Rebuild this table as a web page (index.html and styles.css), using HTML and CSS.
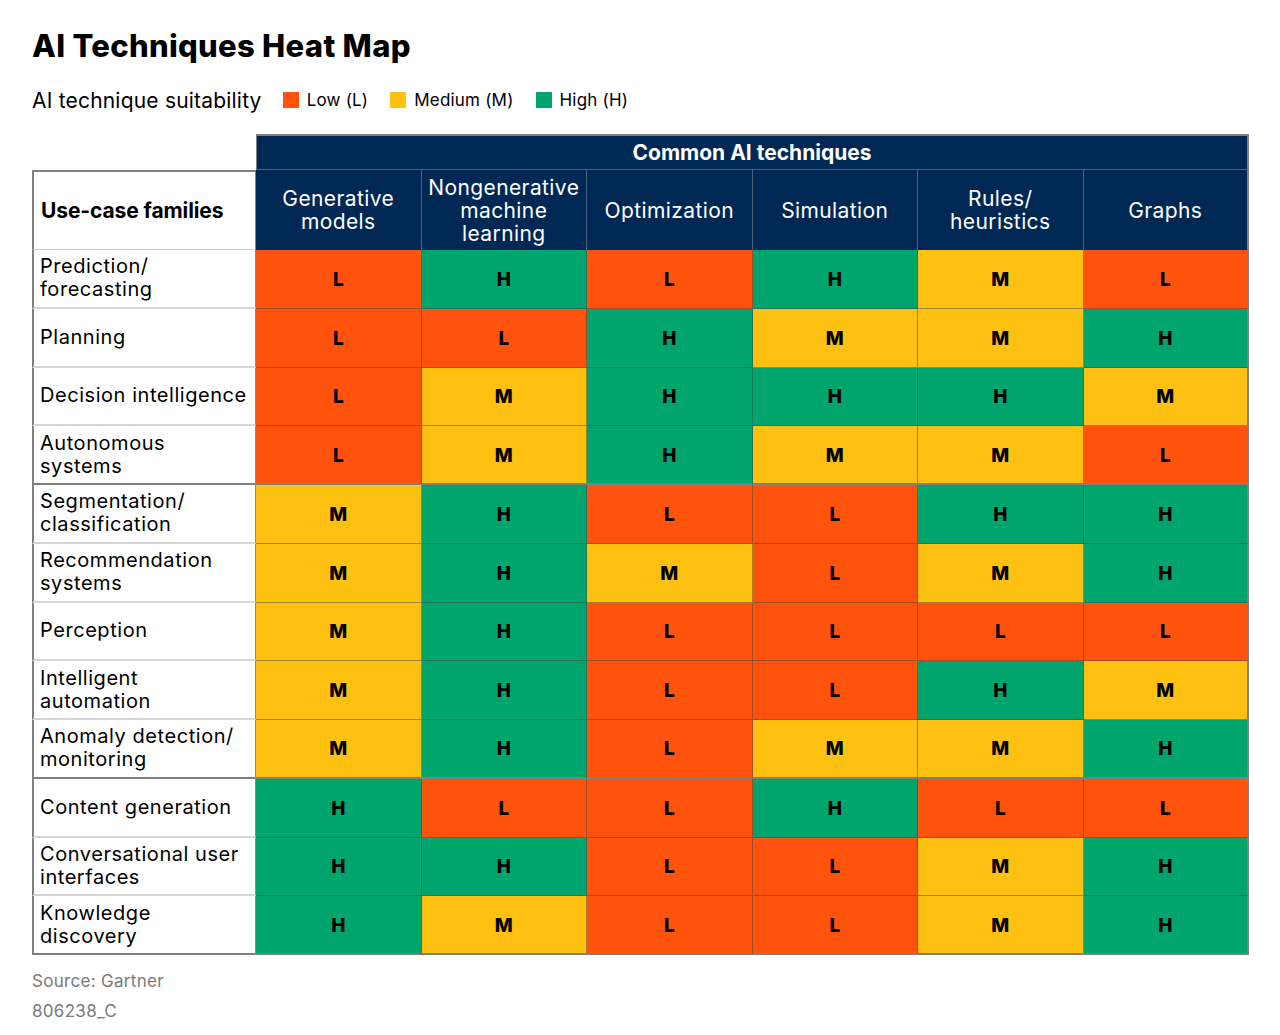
FILE: index.html
```html
<!DOCTYPE html>
<html lang="en">
<head>
<meta charset="utf-8">
<title>AI Techniques Heat Map</title>
<link rel="stylesheet" href="styles.css">
</head>
<body>
<div class="page">
  <h1 class="title">AI Techniques Heat Map</h1>
  <div class="legend">
    <span class="legend-label">AI technique suitability</span>
    <span class="legend-item"><span class="sw low"></span>Low (L)</span>
    <span class="legend-item"><span class="sw med"></span>Medium (M)</span>
    <span class="legend-item"><span class="sw high"></span>High (H)</span>
  </div>

  <div class="grid">
    <div class="corner"></div>
    <div class="span-head">Common AI techniques</div>

    <div class="fam-head">Use-case families</div>
    <div class="col-head">Generative<br>models</div>
    <div class="col-head">Nongenerative<br>machine<br>learning</div>
    <div class="col-head">Optimization</div>
    <div class="col-head">Simulation</div>
    <div class="col-head">Rules/<br>heuristics</div>
    <div class="col-head last">Graphs</div>

    <div class="lab">Prediction/<br>forecasting</div>
    <div class="c low">L</div><div class="c high">H</div><div class="c low">L</div><div class="c high">H</div><div class="c med">M</div><div class="c low last">L</div>

    <div class="lab">Planning</div>
    <div class="c low">L</div><div class="c low">L</div><div class="c high">H</div><div class="c med">M</div><div class="c med">M</div><div class="c high last">H</div>

    <div class="lab">Decision intelligence</div>
    <div class="c low">L</div><div class="c med">M</div><div class="c high">H</div><div class="c high">H</div><div class="c high">H</div><div class="c med last">M</div>

    <div class="lab gend">Autonomous<br>systems</div>
    <div class="c low gend">L</div><div class="c med gend">M</div><div class="c high gend">H</div><div class="c med gend">M</div><div class="c med gend">M</div><div class="c low gend last">L</div>

    <div class="lab">Segmentation/<br>classification</div>
    <div class="c med">M</div><div class="c high">H</div><div class="c low">L</div><div class="c low">L</div><div class="c high">H</div><div class="c high last">H</div>

    <div class="lab">Recommendation<br>systems</div>
    <div class="c med">M</div><div class="c high">H</div><div class="c med">M</div><div class="c low">L</div><div class="c med">M</div><div class="c high last">H</div>

    <div class="lab">Perception</div>
    <div class="c med">M</div><div class="c high">H</div><div class="c low">L</div><div class="c low">L</div><div class="c low">L</div><div class="c low last">L</div>

    <div class="lab">Intelligent<br>automation</div>
    <div class="c med">M</div><div class="c high">H</div><div class="c low">L</div><div class="c low">L</div><div class="c high">H</div><div class="c med last">M</div>

    <div class="lab gend">Anomaly detection/<br>monitoring</div>
    <div class="c med gend">M</div><div class="c high gend">H</div><div class="c low gend">L</div><div class="c med gend">M</div><div class="c med gend">M</div><div class="c high gend last">H</div>

    <div class="lab">Content generation</div>
    <div class="c high">H</div><div class="c low">L</div><div class="c low">L</div><div class="c high">H</div><div class="c low">L</div><div class="c low last">L</div>

    <div class="lab">Conversational user<br>interfaces</div>
    <div class="c high">H</div><div class="c high">H</div><div class="c low">L</div><div class="c low">L</div><div class="c med">M</div><div class="c high last">H</div>

    <div class="lab gend">Knowledge<br>discovery</div>
    <div class="c high gend">H</div><div class="c med gend">M</div><div class="c low gend">L</div><div class="c low gend">L</div><div class="c med gend">M</div><div class="c high gend last">H</div>
  </div>

  <p class="note">Source: Gartner</p>
  <p class="note">806238_C</p>
</div>
</body>
</html>
```

FILE: styles.css
```css
* { box-sizing: border-box; }

html, body {
  margin: 0;
  padding: 0;
  background: #ffffff;
}

body {
  font-family: "Inter", "Liberation Sans", sans-serif;
  color: #000000;
}

.page {
  padding: 26px 32px 0 32px;
}

.title {
  margin: 0;
  font-size: 31px;
  line-height: 40px;
  font-weight: 800;
  letter-spacing: 0.3px;
}

.legend {
  display: flex;
  align-items: center;
  margin-top: 17px;
  height: 34px;
  font-size: 17px;
  letter-spacing: 0.2px;
}

.legend-label {
  font-size: 21px;
  letter-spacing: 0.2px;
  margin-right: 21px;
}

.legend-item {
  display: flex;
  align-items: center;
  margin-right: 22px;
}

.sw {
  width: 16px;
  height: 16px;
  margin-right: 8px;
}

.low { background: #ff530d; }
.med { background: #fec111; }
.high { background: #00a56e; }

.grid {
  display: grid;
  grid-template-columns: 224px repeat(6, 1fr);
  grid-template-rows: 36px 80px repeat(12, 58.75px);
  width: 1217px;
  margin-top: 17px;
}

.corner { background: #ffffff; }

.span-head {
  grid-column: span 6;
  background: #002855;
  color: #ffffff;
  font-weight: 700;
  font-size: 21px;
  letter-spacing: 0;
  display: flex;
  align-items: center;
  justify-content: center;
  border-top: 2px solid #808080;
  border-left: 1px solid #808080;
  border-right: 2px solid #808080;
  border-bottom: 1px solid #4a6283;
}

.fam-head {
  display: flex;
  align-items: center;
  padding-left: 7px;
  font-weight: 700;
  font-size: 21px;
  letter-spacing: -0.1px;
  border-top: 2px solid #808080;
  border-left: 2px solid #808080;
  border-right: 1px solid #808080;
  border-bottom: 1px solid #cfcfcf;
}

.col-head {
  background: #002855;
  color: #ffffff;
  font-size: 21px;
  line-height: 23px;
  letter-spacing: 0.4px;
  text-align: center;
  display: flex;
  align-items: center;
  justify-content: center;
  border-right: 1px solid #4a6283;
}

.col-head.last { border-right: 2px solid #808080; }

.lab {
  display: flex;
  align-items: center;
  padding-left: 6px;
  font-size: 20px;
  line-height: 23px;
  letter-spacing: 0.55px;
  border-left: 2px solid #808080;
  border-right: 1px solid #8a8a8a;
  border-bottom: 2px solid #d6d6d6;
}

.c {
  display: flex;
  align-items: center;
  justify-content: center;
  font-weight: 800;
  font-size: 19px;
  padding-top: 1px;
  border-right: 1px solid rgba(70, 70, 70, 0.5);
  border-bottom: 1px solid rgba(70, 70, 70, 0.5);
}

.c.last { border-right: 2px solid #808080; }

.gend,
.lab.gend { border-bottom: 2px solid #7f7f7f; }

.note {
  margin: 0;
  font-size: 17px;
  line-height: 30px;
  letter-spacing: 0.3px;
  color: #7a7a7a;
}

.note:first-of-type { margin-top: 11px; }
```
